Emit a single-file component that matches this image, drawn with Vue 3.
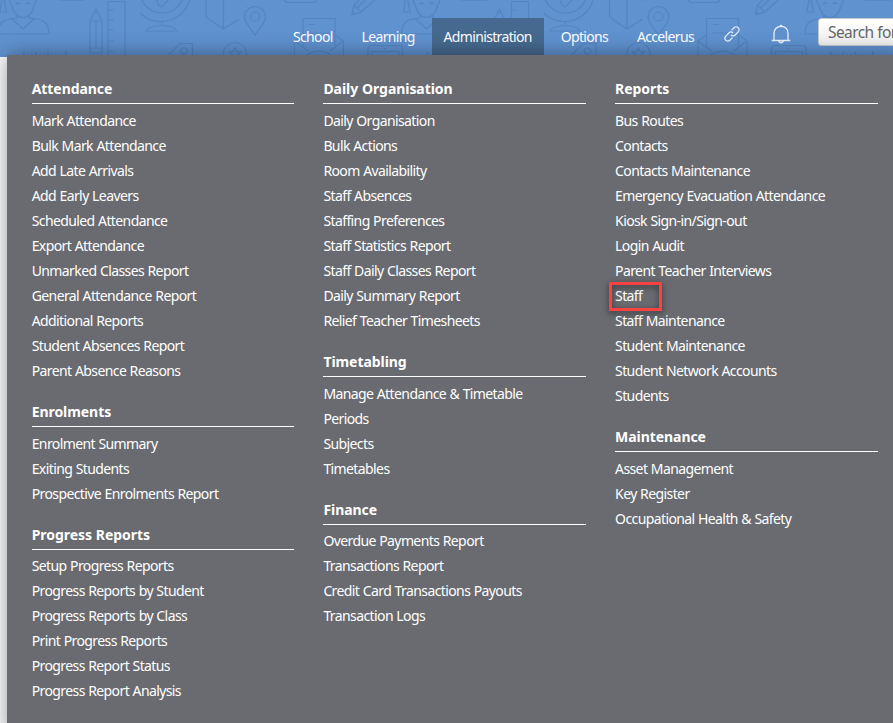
<script setup>
const nav = [
  { label: 'School' },
  { label: 'Learning' },
  { label: 'Administration', active: true },
  { label: 'Options' },
  { label: 'Accelerus' },
]

const columns = [
  [
    {
      title: 'Attendance',
      items: ['Mark Attendance', 'Bulk Mark Attendance', 'Add Late Arrivals', 'Add Early Leavers', 'Scheduled Attendance', 'Export Attendance', 'Unmarked Classes Report', 'General Attendance Report', 'Additional Reports', 'Student Absences Report', 'Parent Absence Reasons'],
    },
    { title: 'Enrolments', items: ['Enrolment Summary', 'Exiting Students', 'Prospective Enrolments Report'] },
    {
      title: 'Progress Reports',
      items: ['Setup Progress Reports', 'Progress Reports by Student', 'Progress Reports by Class', 'Print Progress Reports', 'Progress Report Status', 'Progress Report Analysis'],
    },
  ],
  [
    {
      title: 'Daily Organisation',
      items: ['Daily Organisation', 'Bulk Actions', 'Room Availability', 'Staff Absences', 'Staffing Preferences', 'Staff Statistics Report', 'Staff Daily Classes Report', 'Daily Summary Report', 'Relief Teacher Timesheets'],
    },
    { title: 'Timetabling', items: ['Manage Attendance & Timetable', 'Periods', 'Subjects', 'Timetables'] },
    { title: 'Finance', items: ['Overdue Payments Report', 'Transactions Report', 'Credit Card Transactions Payouts', 'Transaction Logs'] },
  ],
  [
    {
      title: 'Reports',
      items: ['Bus Routes', 'Contacts', 'Contacts Maintenance', 'Emergency Evacuation Attendance', 'Kiosk Sign-in/Sign-out', 'Login Audit', 'Parent Teacher Interviews', 'Staff', 'Staff Maintenance', 'Student Maintenance', 'Student Network Accounts', 'Students'],
    },
    { title: 'Maintenance', items: ['Asset Management', 'Key Register', 'Occupational Health & Safety'] },
  ],
]
const highlighted = 'Staff'
</script>

<template>
  <div class="page">
    <header class="header">
      <svg class="doodles" width="893" height="57" viewBox="0 0 893 57" aria-hidden="true">
        <defs>
          <g id="doodle-tile">
            <!-- student -->
            <path d="M10 -2 Q9 3 12 5 C13 13 18 17.500 23 17.500 S33 13 34 5 Q37 3 36 -2 M16 4 q2-2 4 0 M26 4 q2-2 4 0 M17 16 v2 C7 19 -2 20 -2 34 H49 C49 20 40 19 29 18 v-2 M12 19 L23 29 L34 19 M2 -1 L0 12 H6.500 L4 -1" />
            <path d="M58 0 H84" />
            <!-- pencil -->
            <path d="M90 53 V21 L96 9 L102 21 V53 Z M90 21 H102 M96 21 V48 M90 48 H102 M94 13 H98" />
            <!-- ruler -->
            <path d="M108 60 V1.500 H125 V60 M108 10 h6 M108 20 h6 M108 30 h6 M108 41 h6 M108 51 h6" />
            <!-- globe -->
            <circle cx="162" cy="-9" r="22" />
            <path d="M140 13 L144 16 M141 14 A30 30 0 0 0 190 -1 M157 0 q1 7 5 7 l7-8 M162 21 v4 M146 31 C150 24 173 24 177 31 Z" />
            <!-- map -->
            <path d="M206 -2 V17 L223.500 29 L239 19 M223.500 -2 V29 M241 -2 l1 3" />
            <!-- place marker -->
            <path d="M255 35 C250 27 244.500 23 244.500 17 A10.500 10.500 0 0 1 265.500 17 C265.500 23 260 27 255 35 Z" />
            <circle cx="255" cy="16.500" r="4.500" />
            <!-- tag -->
            <path d="M165 58 L180 43.500 H192.500 V58" />
            <circle cx="184" cy="51" r="3.200" />
            <!-- badge -->
            <circle cx="235" cy="54" r="11.500" />
            <path d="M235 47.500 l1.800 4 4.200 .3 -3.200 3 1 4.200 -3.800-2.300 -3.800 2.300 1-4.200 -3.200-3 4.200-.3z" />
            <!-- card -->
            <path d="M284.500 -2 Q284.500 2.500 288 2.500 H313 Q316.500 2.500 316.500 -2" />
            <!-- letter -->
            <path d="M303 46 V18.500 H335 V46 M309 24.500 H315 M309 33 H329 M303 35 L294.500 41 V58 M335 35 L343.500 41 V58 M294.500 41 L308 51 M343.500 41 L330 51 M307 55 Q319 47 331 55" />
            <!-- crayon -->
            <path d="M351.500 15 L354 5 L361 -2 M351.500 15 L361 12 L376 -1 M354 5 L361 12 M357 8 L367 -2 M352 12 L355 14" />
            <!-- tablet -->
            <path d="M368 58 V49 Q368 45.500 372 45.500 H399 Q402.500 45.500 402.500 49 V58 M372 58 V51.500 H399 V58 M384 48.500 h2" />
            <!-- scale -->
            <path class="ticks" d="M24 52 V57 M28 54 V57 M32 54 V57 M36 52 V57 M40 54 V57 M44 54 V57 M48 52 V57 M52 54 V57 M56 54 V57 M60 54 V57 M66 51 V57" />
          </g>
        </defs>
        <use href="#doodle-tile" />
        <use href="#doodle-tile" x="403.500" />
        <use href="#doodle-tile" x="807" />
      </svg>
      <nav class="nav">
        <a v-for="n in nav" :key="n.label" class="nav-item" :class="{ active: n.active }">{{ n.label }}</a>
        <a class="icon link">
          <svg width="16" height="16" viewBox="0 0 18 18">
            <g transform="rotate(-45 9 9)">
              <path d="M6.500 12.300 H2.400 A3.300 3.300 0 0 1 2.400 5.700 H7.300 A3.300 3.300 0 0 1 10.600 9" />
              <path d="M11.500 5.700 H15.600 A3.300 3.300 0 0 1 15.600 12.300 H10.700 A3.300 3.300 0 0 1 7.400 9" />
            </g>
          </svg>
        </a>
        <a class="icon bell">
          <svg width="20" height="20" viewBox="0 0 20 20">
            <path d="M.7 16.500 H19.300 M3 16.300 V9.500 C3 5 6 2.300 10 2.300 S17 5 17 9.500 V16.300 M9 2 Q10 .6 11 2 M7.500 17 Q10 20.500 12.500 17" />
          </svg>
        </a>
      </nav>
      <div class="search">Search for</div>
    </header>
    <main class="menu">
      <div v-for="(col, i) in columns" :key="i" class="column">
        <section v-for="s in col" :key="s.title" class="group">
          <h2>{{ s.title }}</h2>
          <ul>
            <li v-for="item in s.items" :key="item">
              <a :class="{ marked: item === highlighted }">{{ item }}</a>
            </li>
          </ul>
        </section>
      </div>
    </main>
  </div>
</template>

<style>
body { margin: 0; overflow: hidden; }
</style>

<style scoped>
.page {
  width: 893px;
  height: 723px;
  overflow: hidden;
  background: #fff;
  font-family: Tahoma, "Noto Sans", sans-serif;
  font-size: 14px;
  letter-spacing: -0.6px;
  word-spacing: 0.4px;
}
.header {
  position: relative;
  box-sizing: border-box;
  height: 57px;
  padding-top: 18px;
  padding-left: 281px;
  display: flex;
  align-items: flex-start;
  overflow: hidden;
  background: #6092d0;
}
.doodles {
  position: absolute;
  left: 0;
  top: 0;
  fill: none;
  stroke: #5385c2;
  stroke-width: 1.2;
}
.ticks { stroke-width: 1.5; }
.nav {
  position: relative;
  display: flex;
  width: 537px;
  flex: none;
  letter-spacing: -0.65px;
}
.nav-item {
  box-sizing: border-box;
  height: 37px;
  padding: 0 12px;
  margin-right: 4.800px;
  line-height: 38px;
  color: #fff;
  white-space: nowrap;
}
.nav-item.active { background: #466a8f; }
.icon svg {
  display: block;
  fill: none;
  stroke: #e9f1fb;
  stroke-width: 1.3;
  overflow: visible;
}
.link { margin: 8px 0 0 13.500px; }
.bell { margin: 6px 0 0 31px; }
.search {
  position: relative;
  box-sizing: border-box;
  flex: none;
  width: 120px;
  height: 28px;
  padding-left: 9px;
  border: 1px solid #c3c6cb;
  border-radius: 3px;
  background: linear-gradient(#fff, #f0f0f0);
  color: #666;
  font-size: 15.500px;
  letter-spacing: -0.6px;
  line-height: 27px;
}
.menu {
  position: relative;
  box-sizing: border-box;
  width: 900px;
  height: 680px;
  margin: -2px 0 0 7px;
  padding: 25.300px 0 0 24.700px;
  display: flex;
  gap: 29.200px;
  background: #696b70;
  color: #fff;
  box-shadow: 0 0 20px rgba(0, 0, 0, .42);
}
.column { width: 262.500px; flex: none; }
.group { margin-bottom: 19px; }
h2 {
  margin: 0 0 4.700px;
  height: 23px;
  border-bottom: 1px solid #fff;
  font-size: 14px;
  line-height: 18px;
  font-weight: 700;
  letter-spacing: -0.06px;
}
ul { margin: 0; padding: 0; list-style: none; }
li { height: 25px; line-height: 24px; white-space: nowrap; }
.marked { position: relative; }
.marked::after {
  content: "";
  position: absolute;
  box-sizing: border-box;
  left: -6px;
  top: -4px;
  width: 53px;
  height: 29px;
  border: 3px solid #fb4141;
  filter: drop-shadow(0 2px 3px rgba(0, 0, 0, .6));
}
</style>
